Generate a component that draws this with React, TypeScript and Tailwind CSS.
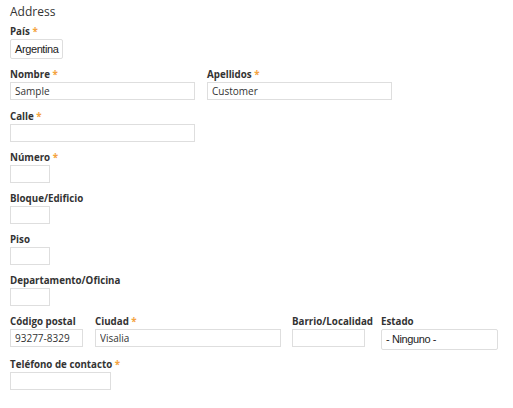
import React from "react";

const Req = () => <span className="text-[#f4a340] font-bold"> *</span>;

function Label({ children, req }: { children: React.ReactNode; req?: boolean }) {
  return (
    <div className="text-[9.75px] leading-[14px] font-bold text-[#333] whitespace-nowrap">
      {children}
      {req && <Req />}
    </div>
  );
}

function Input({ w, value }: { w: string; value?: string }) {
  return (
    <input
      readOnly
      value={value ?? ""}
      className={`block ${w} h-[18px] border border-[#dedede] bg-white px-[4px] text-[10px] leading-[16px] text-[#333] outline-none`}
      style={{ fontFamily: '"Open Sans", sans-serif' }}
    />
  );
}

const selFont = { fontFamily: '"Liberation Sans", Arial, sans-serif' };

export default function App() {
  return (
    <div
      className="w-[513px] h-[408px] overflow-hidden bg-white pl-[10px] pt-[4px]"
      style={{ fontFamily: '"Open Sans", sans-serif' }}
    >
      <div className="text-[12px] leading-[16px] text-[#333]">Address</div>

      <div className="mt-[5px]">
        <Label req>País</Label>
        <div
          className="w-[53px] h-[20px] border border-[#dedede] rounded-[2px] bg-white flex items-center pl-[4px] text-[11px] tracking-[-0.4px] text-[#222]"
          style={selFont}
        >
          Argentina
        </div>
      </div>

      <div className="mt-[9px] flex gap-[12px]">
        <div>
          <Label req>Nombre</Label>
          <Input w="w-[185px]" value="Sample" />
        </div>
        <div>
          <Label req>Apellidos</Label>
          <Input w="w-[185px]" value="Customer" />
        </div>
      </div>

      <div className="mt-[10px]">
        <Label req>Calle</Label>
        <Input w="w-[185px]" />
      </div>
      <div className="mt-[9px]">
        <Label req>Número</Label>
        <Input w="w-[40px]" />
      </div>
      <div className="mt-[9px]">
        <Label>Bloque/Edificio</Label>
        <Input w="w-[40px]" />
      </div>
      <div className="mt-[9px]">
        <Label>Piso</Label>
        <Input w="w-[40px]" />
      </div>
      <div className="mt-[9px]">
        <Label>Departamento/Oficina</Label>
        <Input w="w-[40px]" />
      </div>

      <div className="mt-[9px] flex items-start">
        <div className="w-[73px]">
          <Label>Código postal</Label>
          <Input w="w-[73px]" value="93277-8329" />
        </div>
        <div className="ml-[12px] w-[186px]">
          <Label req>Ciudad</Label>
          <Input w="w-[186px]" value="Visalia" />
        </div>
        <div className="ml-[11px] w-[73px]">
          <Label>Barrio/Localidad</Label>
          <Input w="w-[73px]" />
        </div>
        <div className="ml-[16px]">
          <Label>Estado</Label>
          <div
            className="w-[117px] h-[21px] mb-[-3px] border border-[#dedede] rounded-[2px] bg-white flex items-center pl-[4px] text-[11px] tracking-[-0.4px] text-[#222]"
            style={selFont}
          >
            - Ninguno -
          </div>
        </div>
      </div>

      <div className="mt-[11px]">
        <Label req>Teléfono de contacto</Label>
        <Input w="w-[101px]" />
      </div>
    </div>
  );
}
